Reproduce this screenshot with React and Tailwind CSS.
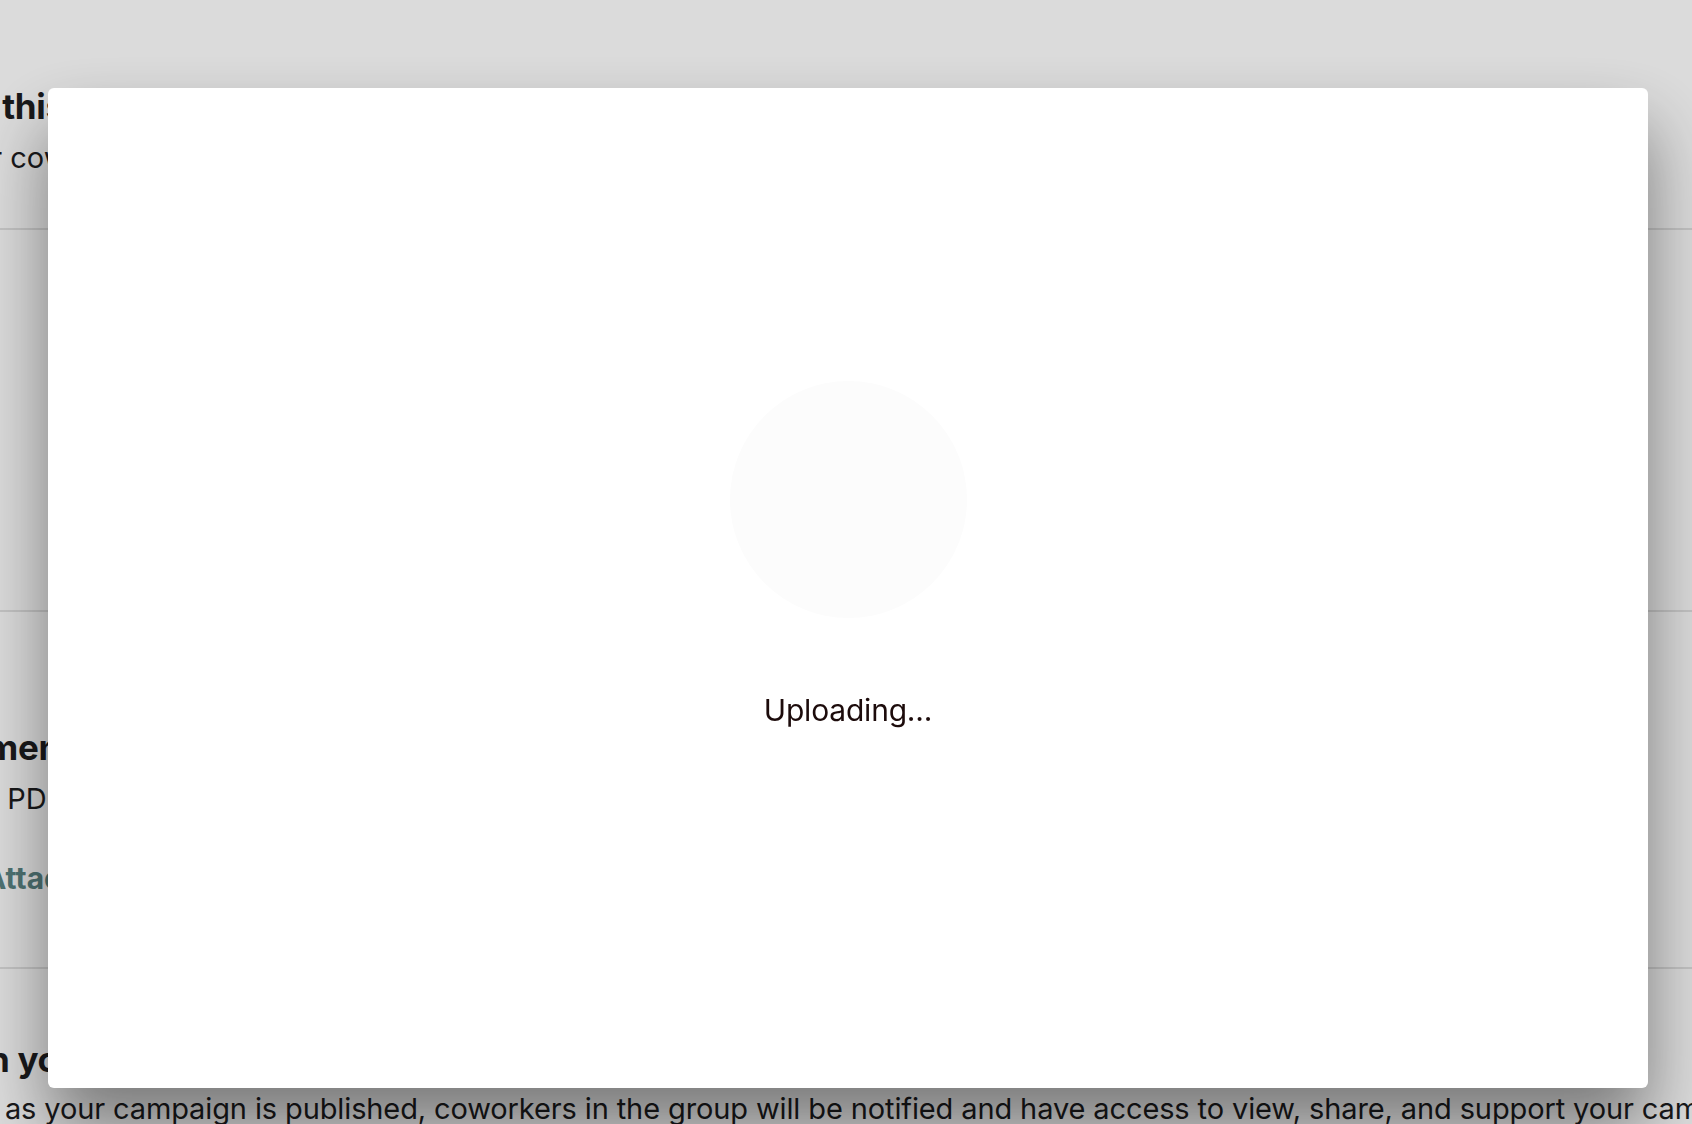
import React from "react";

function PageBehind() {
  return (
    <div className="h-screen overflow-hidden bg-white text-[#1d1d1f] font-['Inter',sans-serif]">
      {/* Who is this for */}
      <div className="pt-[86px]">
        <h2 className="ml-[-121px] whitespace-nowrap text-[35px] font-bold leading-[40px] tracking-[-0.3px]">
          Who is this campaign for?
        </h2>
        <p className="mt-[14px] ml-[-110px] whitespace-nowrap text-[29px] leading-[36px]">
          Let your coworkers know who should support it.
        </p>
      </div>
      <div className="mt-[52px] h-[2px] bg-[#e3e3e3]" />

      {/* hidden section */}
      <div className="h-[380px]" />
      <div className="h-[2px] bg-[#e3e3e3]" />

      {/* Supporting documents */}
      <div className="pt-[115px]">
        <h2 className="ml-[-131px] whitespace-nowrap text-[35px] font-bold leading-[40px] tracking-[-0.3px]">
          Supplementary documents
        </h2>
        <p className="mt-[14px] ml-[-318px] whitespace-nowrap text-[29px] leading-[36px]">
          Add an image, video or PDF to your campaign.
        </p>
        <button className="mt-[43px] ml-[-16px] whitespace-nowrap text-[30px] font-bold leading-[36px] text-[#5b8585]">
          Attach file
        </button>
      </div>
      <div className="mt-[71px] h-[2px] bg-[#e3e3e3]" />

      {/* Group */}
      <div className="pt-[70px]">
        <h2 className="ml-[-154px] whitespace-nowrap text-[35px] font-bold leading-[40px] tracking-[-0.3px]">
          Publish in your group
        </h2>
        <p className="mt-[12px] ml-[-113px] whitespace-nowrap text-[29px] leading-[36px] tracking-[-0.12px]">
          As soon as your campaign is published, coworkers in the group will be notified and have access to view, share, and support your campaign.
        </p>
      </div>
    </div>
  );
}

function UploadingModal() {
  return (
    <div className="fixed inset-0 flex justify-start bg-black/[0.14] pl-[48px] pt-[88px]">
      <div className="flex h-[1000px] w-[1600px] flex-col items-center rounded-md bg-white pt-[293px] shadow-[0_40px_70px_rgba(0,0,0,0.45)]">
        <div className="h-[237px] w-[237px] rounded-full bg-[#fcfcfc]" />
        <p className="mt-[72px] font-['Inter',sans-serif] text-[30px] leading-[40px] tracking-[-0.2px] text-[#1c0b0b]">
          Uploading...
        </p>
      </div>
    </div>
  );
}

export default function App() {
  return (
    <div className="relative">
      <PageBehind />
      <UploadingModal />
    </div>
  );
}
